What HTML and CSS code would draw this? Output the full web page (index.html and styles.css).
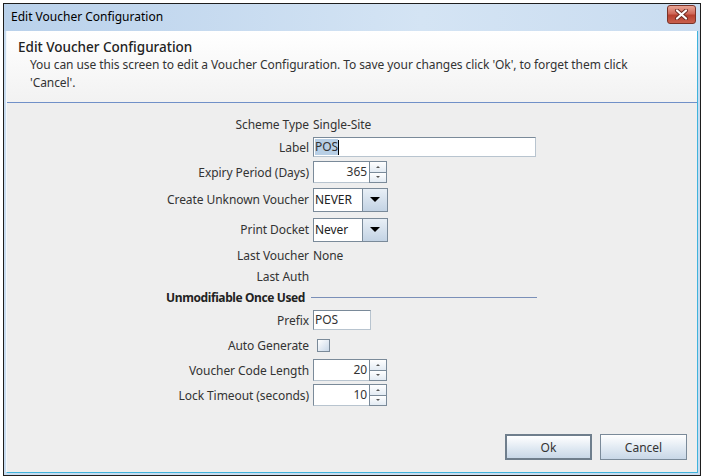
FILE: index.html
```html
<!DOCTYPE html>
<html lang="en">
<head>
  <meta charset="UTF-8" />
  <title>Edit Voucher Configuration</title>
  <link rel="stylesheet" href="styles.css">
</head>
<body>
  <div class="window">
    <div class="titlebar">
      <span class="title">Edit Voucher Configuration</span>
      <div class="close">
        <svg width="15" height="11" viewBox="0 0 15 11">
          <path d="M3 1.5 L12 9.5 M12 1.5 L3 9.5" stroke="#6b2a22" stroke-width="4" stroke-linecap="round"/>
          <path d="M3 1.5 L12 9.5 M12 1.5 L3 9.5" stroke="#ffffff" stroke-width="2.2" stroke-linecap="round"/>
        </svg>
      </div>
    </div>
    <div class="client">
      <div class="banner">
        <h1>Edit Voucher Configuration</h1>
        <p>You can use this screen to edit a Voucher Configuration. To save your changes click 'Ok', to forget them click<br>'Cancel'.</p>
      </div>

      <div class="form">
        <div class="lbl">Scheme Type</div>
        <div class="val">Single-Site</div>

        <div class="lbl">Label</div>
        <div><div class="field wide"><span class="sel">POS</span><span class="caret"></span></div></div>

        <div class="lbl">Expiry Period (Days)</div>
        <div class="spinner">
          <div class="spin-text">365</div>
          <div class="spin-btns">
            <div class="spin-btn"><span class="up"></span></div>
            <div class="spin-btn"><span class="down"></span></div>
          </div>
        </div>

        <div class="lbl">Create Unknown Voucher</div>
        <div class="combo">
          <div class="combo-text">NEVER</div>
          <div class="combo-btn"><span class="arrow"></span></div>
        </div>

        <div class="lbl">Print Docket</div>
        <div class="combo">
          <div class="combo-text">Never</div>
          <div class="combo-btn"><span class="arrow"></span></div>
        </div>

        <div class="lbl">Last Voucher</div>
        <div class="val">None</div>

        <div class="lbl">Last Auth</div>
        <div class="val"></div>

        <div class="lbl section">Unmodifiable Once Used</div>
        <div class="rule"></div>

        <div class="lbl">Prefix</div>
        <div><div class="field short">POS</div></div>

        <div class="lbl">Auto Generate</div>
        <div><div class="check"></div></div>

        <div class="lbl">Voucher Code Length</div>
        <div class="spinner">
          <div class="spin-text">20</div>
          <div class="spin-btns">
            <div class="spin-btn"><span class="up"></span></div>
            <div class="spin-btn"><span class="down"></span></div>
          </div>
        </div>

        <div class="lbl">Lock Timeout (seconds)</div>
        <div class="spinner">
          <div class="spin-text">10</div>
          <div class="spin-btns">
            <div class="spin-btn"><span class="up"></span></div>
            <div class="spin-btn"><span class="down"></span></div>
          </div>
        </div>
      </div>

      <div class="buttons">
        <button class="btn default">Ok</button>
        <button class="btn">Cancel</button>
      </div>
    </div>
  </div>
</body>
</html>
```

FILE: styles.css
```css
body {
  margin: 0;
  background: #ffffff;
  font-family: "Noto Sans", "Open Sans", sans-serif;
  font-size: 12px;
  letter-spacing: -0.07px;
  color: #333333;
}
.window {
  margin: 3px 0 0 3px;
  width: 692px;
  height: 469px;
  border: 1px solid #1e1e1e;
  background: #c8dcf0;
  padding: 0 2px 2px 2px;
  display: flex;
  flex-direction: column;
}
.titlebar {
  height: 27px;
  margin: 0 -2px;
  padding: 0 4px 0 7px;
  display: flex;
  justify-content: space-between;
  align-items: flex-start;
  background: linear-gradient(to right, #b9d1eb, #d4e4f4 60%, #c9dcf0);
}
.title {
  color: #000000;
  line-height: 25px;
  letter-spacing: 0;
}
.close {
  margin-top: 1px;
  width: 29px;
  height: 19px;
  box-sizing: border-box;
  border: 1px solid #7a3328;
  border-radius: 3px;
  background: linear-gradient(to bottom, #e9a595, #d0695a 45%, #b8402f 55%, #c9604d);
  display: flex;
  align-items: center;
  justify-content: center;
}
.client {
  flex: 1;
  background: #eeeeee;
  border-left: 1px solid #f4f8fc;
  border-right: 1px solid #3fb3dc;
  border-bottom: 1px solid #3fb3dc;
  display: flex;
  flex-direction: column;
}
.banner {
  height: 72px;
  box-sizing: border-box;
  background: linear-gradient(to bottom, #ffffff, #f2f2f2);
  border-bottom: 1px solid #7090c8;
  padding: 7px 0 0 11px;
}
.banner h1 {
  margin: 0;
  font-size: 13.5px;
  font-weight: 500;
  line-height: 18px;
  letter-spacing: 0;
  color: #222222;
}
.banner p {
  margin: 0;
  padding-left: 12px;
  line-height: 18px;
  white-space: nowrap;
}
.form {
  margin-top: 12px;
  display: grid;
  grid-template-columns: 302px 230px;
  grid-template-rows: 18px 22px 22px 27px 27px 18px 18px 18px 22px 22px 22px 22px;
  column-gap: 4px;
  row-gap: 3px;
  align-items: center;
}
.lbl {
  text-align: right;
  white-space: nowrap;
}
.section {
  font-weight: bold;
  letter-spacing: -0.4px;
  padding-right: 4px;
  color: #222222;
}
.rule {
  height: 1px;
  width: 226px;
  margin-left: -2px;
  background: #7a8fb8;
}
.field {
  height: 20px;
  box-sizing: border-box;
  border: 1px solid #7a8a99;
  border-right-color: #b8c4cf;
  border-bottom-color: #b8c4cf;
  background: #ffffff;
  padding: 0 1px;
  line-height: 18px;
  display: flex;
  align-items: center;
}
.wide { width: 223px; }
.short { width: 58px; }
.sel {
  background: #b8cfe5;
  line-height: 16px;
}
.caret {
  width: 1px;
  height: 15px;
  background: #000000;
}
.spinner {
  display: flex;
  width: 74px;
  height: 22px;
}
.spin-text {
  flex: 1;
  box-sizing: border-box;
  border: 1px solid #7a8a99;
  border-right: none;
  border-bottom-color: #b8c4cf;
  background: #ffffff;
  text-align: right;
  padding-right: 2px;
  line-height: 20px;
}
.spin-btns {
  width: 18px;
  display: flex;
  flex-direction: column;
}
.spin-btn {
  flex: 1;
  box-sizing: border-box;
  border: 1px solid #7a8a99;
  background: linear-gradient(to bottom, #ffffff, #e3ebf3);
  display: flex;
  align-items: center;
  justify-content: center;
}
.spin-btn + .spin-btn { border-top: none; }
.up, .down {
  width: 0;
  height: 0;
  border-left: 2px solid transparent;
  border-right: 2px solid transparent;
}
.up { border-bottom: 2px solid #555555; }
.down { border-top: 2px solid #555555; }
.combo {
  display: flex;
  width: 75px;
  height: 24px;
  box-sizing: border-box;
  border: 1px solid #7a8a99;
  background: #ffffff;
}
.combo-text {
  flex: 1;
  padding-left: 1px;
  line-height: 22px;
  color: #222222;
}
.combo-btn {
  width: 24px;
  border-left: 1px solid #7a8a99;
  background: linear-gradient(to bottom, #e8eff6, #c3d3e4);
  display: flex;
  align-items: center;
  justify-content: center;
}
.arrow {
  width: 0;
  height: 0;
  border-left: 5px solid transparent;
  border-right: 5px solid transparent;
  border-top: 5px solid #000000;
}
.check {
  margin-left: 4px;
  width: 13px;
  height: 13px;
  box-sizing: border-box;
  border: 1px solid #7a8a99;
  background: linear-gradient(to bottom right, #ffffff, #c9d8e8);
}
.buttons {
  margin-top: auto;
  margin-bottom: 12px;
  display: flex;
  justify-content: flex-end;
  gap: 8px;
  padding-right: 10px;
}
.btn {
  width: 87px;
  height: 26px;
  font-family: inherit;
  font-size: 12px;
  color: #333333;
  border: 1px solid #7a8a99;
  background: linear-gradient(to bottom, #ffffff, #dde7f1 60%, #c8d7e7);
  padding: 0;
}
.default {
  border: 2px solid #6f7e8c;
}
```
